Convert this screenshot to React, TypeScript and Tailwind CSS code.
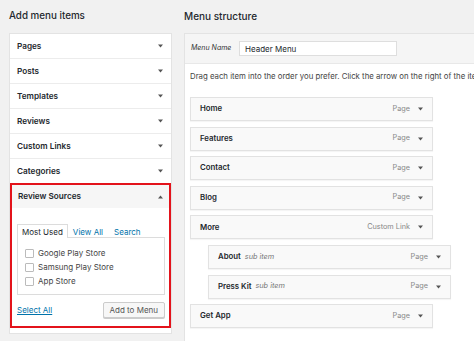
import React from "react";

const font = { fontFamily: "Inter, 'Liberation Sans', sans-serif" };

const leftRows = ["Pages", "Posts", "Templates", "Reviews", "Custom Links", "Categories"];

const menuItems = [
  { label: "Home", type: "Page" },
  { label: "Features", type: "Page" },
  { label: "Contact", type: "Page" },
  { label: "Blog", type: "Page" },
  { label: "More", type: "Custom Link" },
  { label: "About", type: "Page", sub: true },
  { label: "Press Kit", type: "Page", sub: true },
  { label: "Get App", type: "Page" },
];

function Caret({ up = false }: { up?: boolean }) {
  return (
    <svg width="5" height="4" viewBox="0 0 5 4" className="shrink-0">
      {up ? <path d="M0 3.5 L2.5 0.5 L5 3.5 Z" fill="#555" /> : <path d="M0 0.5 L5 0.5 L2.5 3.5 Z" fill="#555" />}
    </svg>
  );
}

export default function App() {
  return (
    <div className="flex w-[474px] h-[341px] overflow-hidden bg-[#f1f1f1] text-[#23282d]" style={font}>
      {/* Left column */}
      <div className="w-[163px] ml-[9px] shrink-0">
        <div className="h-[33px] flex items-center text-[9.8px] font-medium">Add menu items</div>
        <div className="bg-white border border-[#e3e3e3] pb-[5px]">
          {leftRows.map((r) => (
            <div key={r} className="h-[25px] flex items-center justify-between pl-[7px] pr-[8px] border-b border-[#ececec] text-[8.2px] font-semibold">
              <span>{r}</span>
              <Caret />
            </div>
          ))}
          <div className="border-2 border-[#e3131b] mt-[-1px]">
            <div className="h-[23px] flex items-center justify-between pl-[6px] pr-[6px] bg-[#f6f6f6] text-[8.2px] font-semibold">
              <span>Review Sources</span>
              <Caret up />
            </div>
            <div className="pt-[16px] pl-[5px] pr-[4px] pb-[8px]">
              <div className="flex items-end h-[14px] text-[8px]">
                <div className="h-[14px] px-[4px] flex items-center border border-b-0 border-[#dcdcdc] bg-white relative z-10">Most Used</div>
                <span className="ml-[5px] text-[#0073aa] h-[13px] flex items-center">View All</span>
                <span className="ml-[11px] text-[#0073aa] h-[13px] flex items-center">Search</span>
              </div>
              <div className="border border-[#dcdcdc] mt-[-1px] pt-[8px] pb-[6px] pl-[7px]">
                {["Google Play Store", "Samsung Play Store", "App Store"].map((s) => (
                  <div key={s} className="h-[14px] flex items-center text-[8px] text-[#444]">
                    <span className="w-[9px] h-[9px] border border-[#bbb] bg-white mr-[4px] rounded-[1px]" />
                    {s}
                  </div>
                ))}
              </div>
              <div className="flex items-center justify-between mt-[7px]">
                <span className="text-[8px] text-[#0073aa] underline">Select All</span>
                <span className="h-[16px] px-[6px] flex items-center border border-[#ccc] bg-[#f7f7f7] rounded-[2px] text-[8px] text-[#555] shadow-[0_1px_0_#ccc]">Add to Menu</span>
              </div>
            </div>
          </div>
        </div>
      </div>

      {/* Right column */}
      <div className="flex-1 min-w-0 ml-[12px] flex flex-col">
        <div className="h-[33px] flex items-center text-[10px] font-medium">Menu structure</div>
        <div className="flex-1 bg-white border-l border-t border-[#e3e3e3] overflow-hidden">
          <div className="h-[30px] flex items-center bg-[#f5f5f5] border-b border-[#e8e8e8] pl-[6px]">
            <span className="w-[48px] text-[7px] italic text-[#333]">Menu Name</span>
            <div className="w-[158px] h-[15px] bg-white border border-[#dedede] flex items-center pl-[5px] text-[8px]">Header Menu</div>
          </div>
          <div className="mt-[8px] pl-[5px] h-[10px] flex items-center text-[7.8px] text-[#444] whitespace-nowrap">
            Drag each item into the order you prefer. Click the arrow on the right of the item to reveal additional configuration options.
          </div>
          <div className="mt-[15px] pl-[5px] flex flex-col gap-[5.6px]">
            {menuItems.map((m) => (
              <div
                key={m.label}
                className={`${m.sub ? "ml-[18px]" : ""} w-[243px] h-[24px] flex items-center bg-[#f9f9f9] border border-[#e2e2e2] shadow-[0_1px_1px_rgba(0,0,0,0.04)] pl-[9px] pr-[9px]`}
              >
                <span className="text-[7.8px] font-semibold">{m.label}</span>
                {m.sub && <span className="ml-[4px] text-[7.3px] italic text-[#777]">sub item</span>}
                <span className="ml-auto mr-[8px] text-[7.3px] text-[#888]">{m.type}</span>
                <Caret />
              </div>
            ))}
          </div>
        </div>
      </div>
    </div>
  );
}
